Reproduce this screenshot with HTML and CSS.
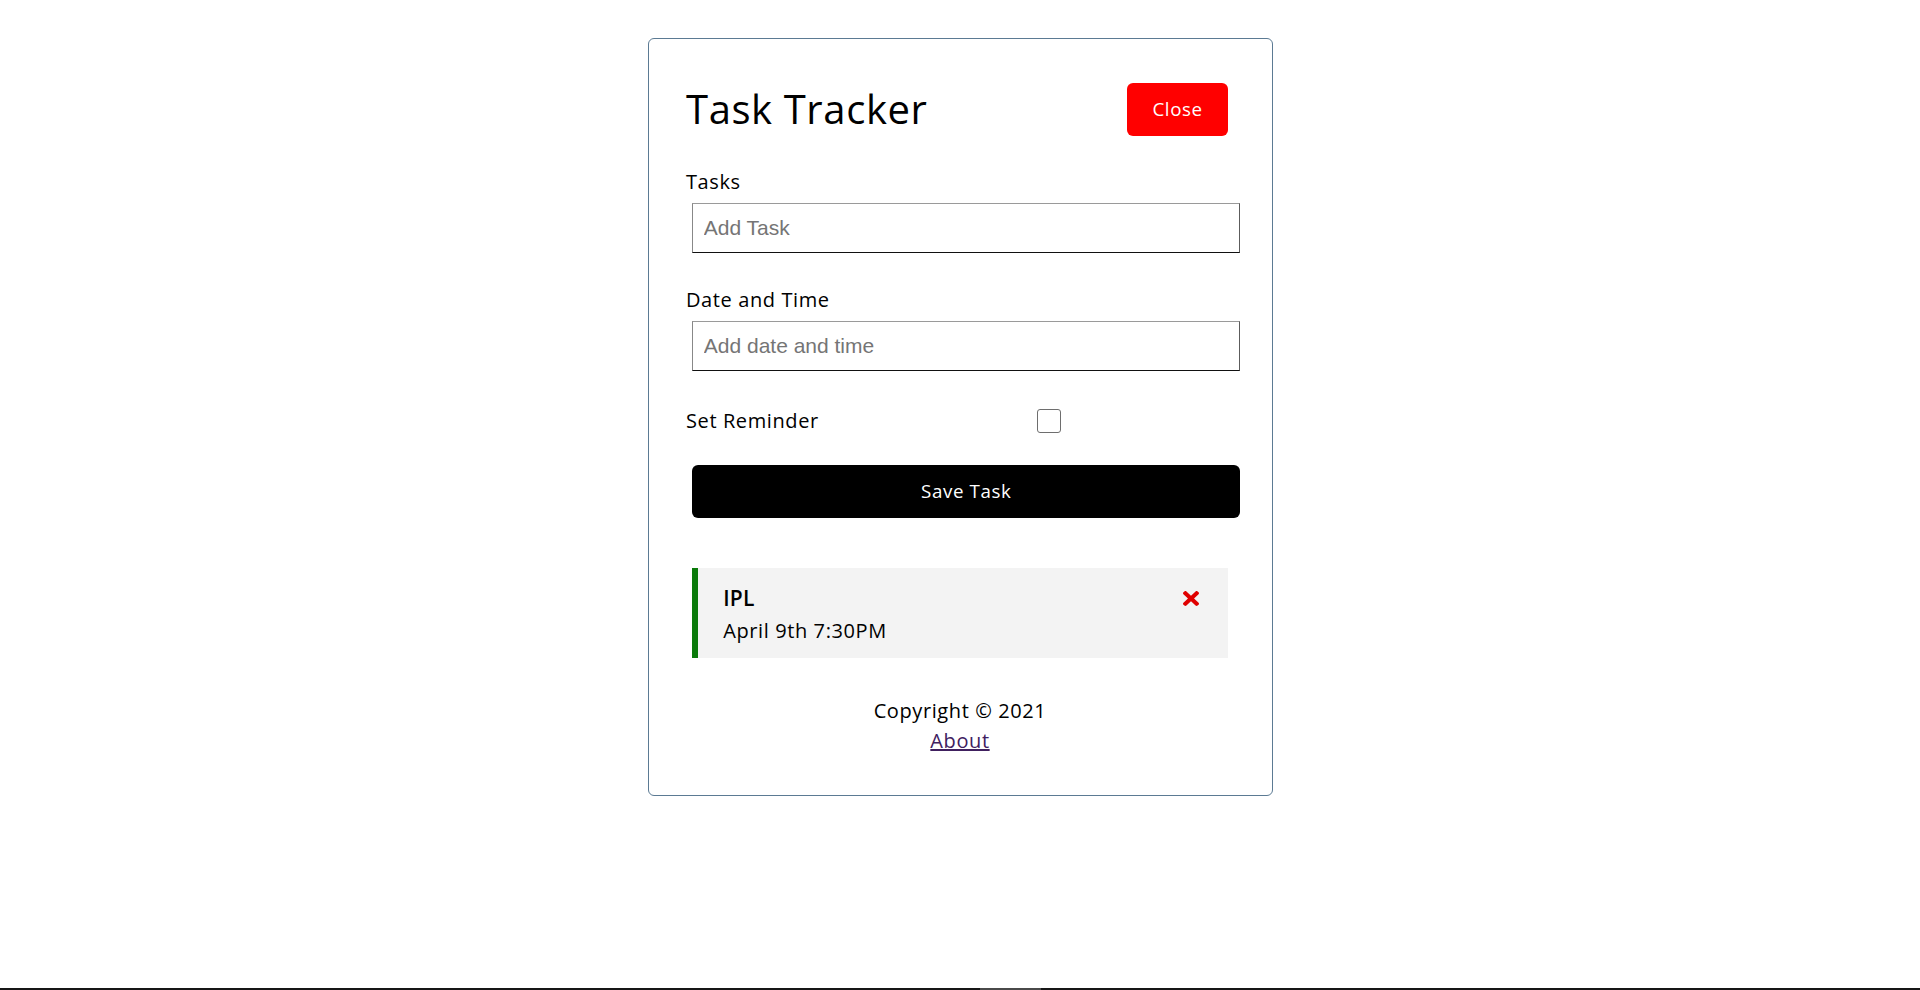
FILE: index.html
```html
<!DOCTYPE html>
<html lang="en">
<head>
<meta charset="utf-8">
<title>Task Tracker</title>
<link rel="stylesheet" href="styles.css">
</head>
<body>
<div class="container">
  <header class="header">
    <h1>Task Tracker</h1>
    <button class="btn btn-close" type="button">Close</button>
  </header>
  <form class="add-form">
    <div class="form-control">
      <label>Tasks</label>
      <input type="text" placeholder="Add Task">
    </div>
    <div class="form-control">
      <label>Date and Time</label>
      <input type="text" placeholder="Add date and time">
    </div>
    <div class="form-control form-control-check">
      <label>Set Reminder</label>
      <span class="check-wrap"><input type="checkbox" class="check"></span>
    </div>
    <input type="submit" value="Save Task" class="btn btn-block">
  </form>
  <div class="tasks">
    <div class="task reminder">
      <h3>IPL <svg class="del" viewBox="0 80 352 352" preserveAspectRatio="none" aria-hidden="true"><path d="M242.72 256l100.07-100.07c12.28-12.28 12.28-32.19 0-44.48l-22.24-22.24c-12.28-12.28-32.19-12.28-44.48 0L176 189.28 75.93 89.21c-12.28-12.28-32.19-12.28-44.48 0L9.21 111.45c-12.28 12.28-12.28 32.19 0 44.48L109.28 256 9.21 356.07c-12.28 12.28-12.28 32.19 0 44.48l22.24 22.24c12.28 12.28 32.2 12.28 44.48 0L176 322.72l100.07 100.07c12.28 12.28 32.2 12.28 44.48 0l22.24-22.24c12.28-12.28 12.28-32.19 0-44.48L242.72 256z"/></svg></h3>
      <p>April 9th 7:30PM</p>
    </div>
  </div>
  <footer class="footer">
    <p>Copyright &copy; 2021</p>
    <a href="#about">About</a>
  </footer>
</div>
<div class="screen-edge"></div>
</body>
</html>
```

FILE: styles.css
```css
* {
  box-sizing: border-box;
  margin: 0;
  padding: 0;
}

body {
  font-family: "Open Sans", "Liberation Sans", sans-serif;
  font-size: 20px;
  line-height: 1.5;
  letter-spacing: 0.03em;
  color: #000;
  background: #fff;
}

.container {
  max-width: 625px;
  margin: 38px auto;
  border: 1px solid #5b7a93;
  border-radius: 6px;
  padding: 37.5px 37.5px 39px;
}

.header {
  display: flex;
  justify-content: space-between;
  align-items: center;
  margin-bottom: 25px;
}

.header h1 {
  font-size: 40px;
  font-weight: 500;
  line-height: 1.5;
  letter-spacing: 0.015em;
}

.btn {
  display: inline-block;
  background: #000;
  color: #fff;
  border: none;
  padding: 12.5px 25px;
  margin: 6.25px;
  border-radius: 6px;
  font-family: inherit;
  font-size: 18.75px;
  line-height: 1.5;
  letter-spacing: inherit;
  cursor: pointer;
}

.btn-close {
  background: #ff0000;
}

.btn-block {
  display: block;
  width: 100%;
  height: 53.75px;
}

.add-form {
  margin-bottom: 50px;
}

.form-control {
  display: flow-root;
  margin: 25px 0;
}

.form-control label {
  display: block;
}

.form-control input[type="text"] {
  display: block;
  width: 100%;
  height: 50px;
  margin: 6.25px;
  padding: 3.75px 10.5px;
  font-family: "Liberation Sans", Arial, sans-serif;
  font-size: 21px;
  letter-spacing: normal;
  color: #000;
  background: #fff;
  border: 1px solid;
  border-color: #9a9a9a #5c5c5c #111 #888;
}

.form-control input[type="text"]::placeholder {
  color: #757575;
}

.form-control-check {
  display: flex;
  align-items: center;
  justify-content: space-between;
}

.form-control-check label {
  flex: 1;
}

.check-wrap {
  flex: 2;
  height: 25px;
  margin: 6.25px;
  display: flex;
  justify-content: center;
  align-items: center;
}

.check {
  appearance: none;
  -webkit-appearance: none;
  width: 24px;
  height: 24px;
  margin: 0;
  border: 1px solid #6e6e6e;
  border-radius: 3px;
  background: #fff;
}

.task {
  background: #f3f3f3;
  margin: 6.25px;
  padding: 12.5px 25px;
}

.task.reminder {
  border-left: 6.25px solid #0a7a0a;
}

.task h3 {
  display: flex;
  align-items: center;
  justify-content: space-between;
  font-size: 21px;
  font-weight: 600;
  line-height: 35px;
  letter-spacing: 0.01em;
}

.del {
  width: 16px;
  height: 15px;
  margin-right: 4px;
  fill: #e00000;
}

.footer {
  margin-top: 37.5px;
  text-align: center;
}

.footer a {
  color: #40205f;
}

.screen-edge {
  position: fixed;
  left: 0;
  right: 0;
  bottom: 0;
  height: 2px;
  background: linear-gradient(to right, #161616 980px, #4a4a4a 980px, #4a4a4a 1041px, #161616 1041px);
}
```
